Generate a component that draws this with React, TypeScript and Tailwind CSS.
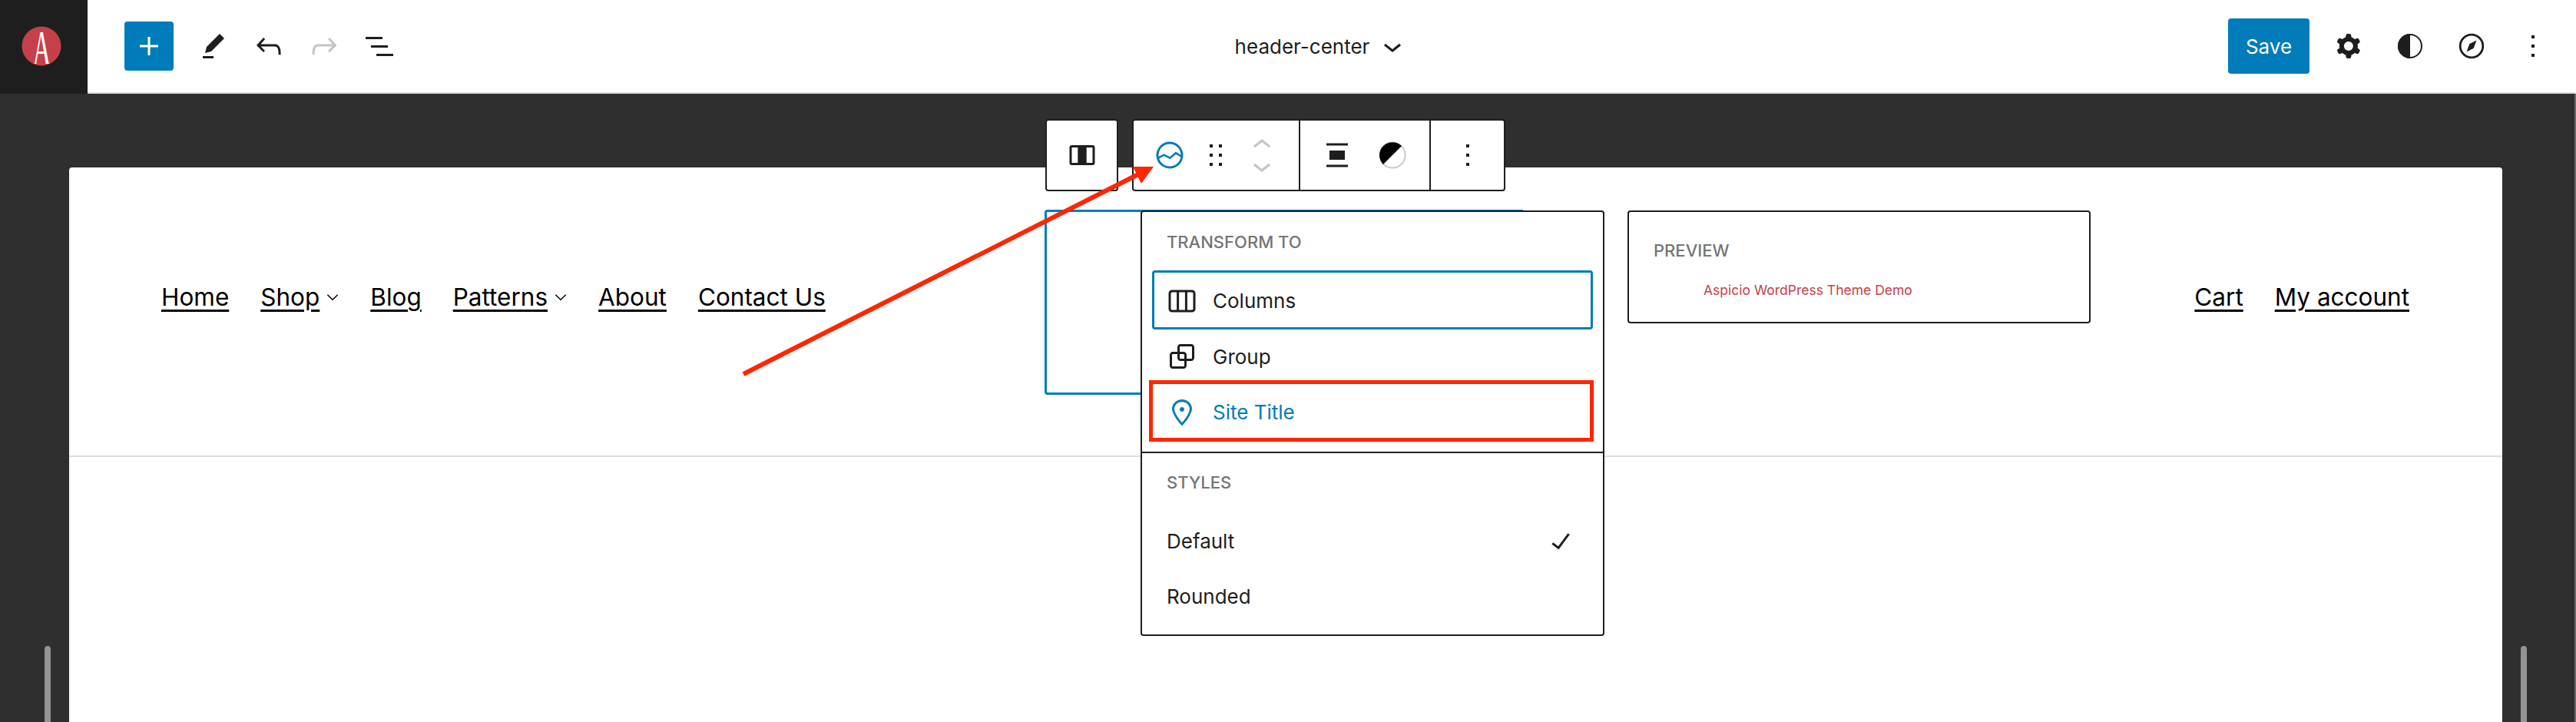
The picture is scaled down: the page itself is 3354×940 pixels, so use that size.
const ink = "#1e1e1e";

function Icon({ d, className = "", fill = "currentColor" }: { d: string; className?: string; fill?: string }) {
  return (
    <svg viewBox="0 0 24 24" className={`h-12 w-12 shrink-0 ${className}`} fill={fill}>
      <path d={d} fillRule="evenodd" clipRule="evenodd" />
    </svg>
  );
}

const paths = {
  plus: "M11.25 12.75V18h1.5v-5.25H18v-1.5h-5.25V6h-1.5v5.25H6v1.5h5.25Z",
  pen: "m19 7-3-3-8.5 8.5-1 4 4-1L19 7Zm-7 11.5H5V20h7v-1.5Z",
  undo: "M18.3 11.7c-.6-.6-1.4-.9-2.3-.9H6.7l2.9-3.3-1.1-1-4.5 5L8.5 16l1-1-2.7-2.7H16c.5 0 .9.2 1.3.5 1 1 1 3.4 1 4.5v.3h1.5v-.2c0-1.5 0-4.3-1.5-5.7z",
  redo: "M15.6 6.5l-1.1 1 2.9 3.3H8c-.9 0-1.7.3-2.3.9-1.4 1.5-1.4 4.2-1.4 5.6v.2h1.5v-.3c0-1.1 0-3.5 1-4.5.3-.3.7-.5 1.3-.5h9.2L14.5 15l1.1 1.1 4.6-4.6-4.6-5z",
  list: "M3 6h11v1.5H3V6Zm3.5 5.5h11V13h-11v-1.5ZM21 17H10v1.5h11V17Z",
  more: "M13 19h-2v-2h2v2zm0-6h-2v-2h2v2zm0-6h-2V5h2v2z",
  chevronDown: "M17.5 11.6L12 16l-5.5-4.4.9-1.2L12 14l4.5-3.6 1 1.2z",
  chevronUp: "M6.5 12.4L12 8l5.5 4.4-.9 1.2L12 10l-4.5 3.6-1-1.2z",
  drag: "M8 7h2V5H8v2zm0 6h2v-2H8v2zm0 6h2v-2H8v2zm6-14v2h2V5h-2zm0 8h2v-2h-2v2zm0 6h2v-2h-2v2z",
  cog: "M10.289 4.836A1 1 0 0 1 11.275 4h1.306a1 1 0 0 1 .987.836l.244 1.466c.787.26 1.503.679 2.108 1.218l1.393-.522a1 1 0 0 1 1.216.437l.653 1.13a1 1 0 0 1-.23 1.273l-1.148.944a6.025 6.025 0 0 1 0 2.435l1.149.946a1 1 0 0 1 .23 1.272l-.653 1.13a1 1 0 0 1-1.216.437l-1.394-.522c-.605.54-1.32.958-2.108 1.218l-.244 1.466a1 1 0 0 1-.987.836h-1.306a1 1 0 0 1-.986-.836l-.244-1.466a5.995 5.995 0 0 1-2.108-1.218l-1.394.522a1 1 0 0 1-1.217-.436l-.653-1.131a1 1 0 0 1 .23-1.272l1.149-.946a6.026 6.026 0 0 1 0-2.435l-1.148-.944a1 1 0 0 1-.23-1.272l.653-1.131a1 1 0 0 1 1.217-.437l1.393.522a5.994 5.994 0 0 1 2.108-1.218l.244-1.466ZM14.929 12a3 3 0 1 1-6 0 3 3 0 0 1 6 0Z",
  group: "M18 4h-7c-1.1 0-2 .9-2 2v3H6c-1.1 0-2 .9-2 2v7c0 1.1.9 2 2 2h7c1.1 0 2-.9 2-2v-3h3c1.1 0 2-.9 2-2V6c0-1.1-.9-2-2-2zm-4.5 14c0 .3-.2.5-.5.5H6c-.3 0-.5-.2-.5-.5v-7c0-.3.2-.5.5-.5h3V13c0 1.1.9 2 2 2h2.5v3zm0-4.5H11c-.3 0-.5-.2-.5-.5v-2.5H13c.3 0 .5.2.5.5v2.5zm5-.5c0 .3-.2.5-.5.5h-3V11c0-1.1-.9-2-2-2h-2.5V6c0-.3.2-.5.5-.5h7c.3 0 .5.2.5.5v7z",
  marker: "M12 9c-.8 0-1.5.7-1.5 1.5S11.2 12 12 12s1.5-.7 1.5-1.5S12.8 9 12 9zm0-5c-3.6 0-6.5 2.8-6.5 6.2 0 .8.3 1.8.9 3.1.5 1.1 1.2 2.3 2 3.6.7 1 3 3.8 3.2 3.9l.4.5.4-.5c.2-.2 2.6-2.9 3.2-3.9.8-1.2 1.5-2.5 2-3.6.6-1.3.9-2.3.9-3.1C18.5 6.8 15.6 4 12 4zm4.3 8.7c-.5 1-1.1 2.2-1.9 3.4-.5.7-1.7 2.2-2.4 3-.7-.8-1.9-2.3-2.4-3-.8-1.2-1.4-2.3-1.9-3.3-.6-1.4-.7-2.2-.7-2.5 0-2.6 2.2-4.7 5-4.7s5 2.1 5 4.7c0 .2-.1 1-.7 2.4z",
  check: "M16.7 7.1l-6.3 8.5-3.3-2.5-.9 1.2 4.5 3.4L17.9 8z",
};

function Logo() {
  return (
    <svg viewBox="0 0 114 122" className="h-[122px] w-[114px]">
      <defs>
        <clipPath id="logo-a">
          <rect x="0" y="0" width="114" height="83" />
        </clipPath>
      </defs>
      <circle cx="54" cy="60" r="25.5" fill="#c6404a" />
      <g clipPath="url(#logo-a)">
        <text
          x="0"
          y="85"
          transform="translate(54.5 0) scale(0.5 1) translate(-24 0)"
          fill="#fff"
          fontSize="66"
          fontFamily="'Liberation Serif', serif"
        >
          A
        </text>
      </g>
    </svg>
  );
}

function HalfCircle() {
  return (
    <svg viewBox="0 0 24 24" className="h-12 w-12">
      <circle cx="12" cy="12" r="7.5" fill="none" stroke={ink} strokeWidth="1" />
      <path d="M12 4a8 8 0 0 0 0 16Z" fill={ink} />
    </svg>
  );
}

function Compass() {
  return (
    <svg viewBox="0 0 24 24" className="h-12 w-12">
      <circle cx="12" cy="12" r="7.4" fill="none" stroke={ink} strokeWidth="1.4" />
      <path d="M15.2 8.2 13.4 13.4 8.8 15.8 10.6 10.6Z" fill={ink} />
    </svg>
  );
}

function ColumnsBlock() {
  return (
    <svg viewBox="0 0 24 24" className="h-12 w-12">
      <rect x="3.75" y="5.5" width="16.5" height="13" rx="1.6" fill={ink} />
      <rect x="5.25" y="7" width="3.9" height="10" fill="#fff" />
      <rect x="14.85" y="7" width="3.9" height="10" fill="#fff" />
    </svg>
  );
}

function SiteLogoBlock() {
  return (
    <svg viewBox="0 0 24 24" className="h-12 w-12" fill="none" stroke="#007cba">
      <circle cx="12" cy="12" r="8" strokeWidth="1.5" />
      <path d="M4.6 13.8 8.2 11.8 12.2 13.8 16 10.6 19.6 12.8" strokeWidth="1.3" />
    </svg>
  );
}

function AlignBlock() {
  return (
    <svg viewBox="0 0 24 24" className="h-12 w-12" fill={ink}>
      <rect x="5" y="4.25" width="14" height="1.5" />
      <rect x="7" y="9" width="10" height="6" />
      <rect x="5" y="18.25" width="14" height="1.5" />
    </svg>
  );
}

function Duotone() {
  return (
    <svg viewBox="0 0 24 24" className="h-12 w-12">
      <circle cx="12" cy="12" r="8.3" fill="#fff" stroke="#cccccc" strokeWidth="1" />
      <path d="M18.01 5.99A8.5 8.5 0 0 0 5.99 18.01Z" fill="#000" />
    </svg>
  );
}

function ColumnsMenu() {
  return (
    <svg viewBox="0 0 24 24" className="h-12 w-12" fill="none" stroke={ink} strokeWidth="1.5">
      <rect x="4" y="5.5" width="16" height="13" rx="1.5" />
      <path d="M9.3 5.5v13M14.7 5.5v13" />
    </svg>
  );
}

function NavLink({ label, caret = false }: { label: string; caret?: boolean }) {
  return (
    <a className="flex items-center text-[31.5px] leading-[44px] text-black underline decoration-[3px] underline-offset-[5px]">
      {label}
      {caret ? (
        <svg viewBox="0 0 12 12" className="ml-[9px] h-4 w-4 shrink-0" fill="none" stroke="#000" strokeWidth="1.1">
          <path d="M1 3.5 6 8.5 11 3.5" />
        </svg>
      ) : null}
    </a>
  );
}

function MenuItem({ icon, label, tone = "text-[#1e1e1e]" }: { icon: React.ReactNode; label: string; tone?: string }) {
  return (
    <div className={`flex h-full items-center gap-4 pl-3 text-[26px] ${tone}`}>
      {icon}
      {label}
    </div>
  );
}

export default function App() {
  return (
    <div className="relative flex h-[940px] w-[3354px] flex-col overflow-hidden bg-[#2f2f2f] font-['Inter',sans-serif] text-[#1e1e1e]">
      <header className="flex h-[122px] shrink-0">
        <div className="w-[114px] bg-[#1e1e1e]">
          <Logo />
        </div>
        <div className="flex flex-1 items-center border-b-2 border-[#e0e0e0] bg-white pr-8 pl-12">
          <div className="flex items-center gap-6">
            <button className="mr-[4px] flex h-16 w-16 items-center justify-center rounded-[4px] bg-[#007cba] text-white">
              <Icon d={paths.plus} />
            </button>
            <Icon d={paths.pen} />
            <Icon d={paths.undo} />
            <Icon d={paths.redo} className="text-[#c4c4c4]" />
            <Icon d={paths.list} />
          </div>
          <div className="flex flex-1 items-center justify-center gap-[6px] pl-[26px] text-[26px]">
            header-center
            <Icon d={paths.chevronDown} />
          </div>
          <div className="flex items-center gap-8">
            <button className="mr-[-5px] flex h-[72px] w-[106px] items-center justify-center rounded-[4px] bg-[#007cba] text-[26px] text-white">
              Save
            </button>
            <Icon d={paths.cog} />
            <HalfCircle />
            <Compass />
            <Icon d={paths.more} />
          </div>
        </div>
      </header>

      <main className="flex-1 px-[96px] pt-[96px] pl-[90px]">
        <div className="relative h-full rounded-t-[4px] bg-white">
          <div className="flex h-[377px] items-start justify-between border-b-2 border-[#dddddd] px-[120px] pt-[147px]">
            <nav className="flex items-center gap-[41px]">
              <NavLink label="Home" />
              <NavLink label="Shop" caret />
              <NavLink label="Blog" />
              <NavLink label="Patterns" caret />
              <NavLink label="About" />
              <NavLink label="Contact Us" />
            </nav>
            <nav className="flex items-center gap-[41px] pr-px">
              <NavLink label="Cart" />
              <NavLink label="My account" />
            </nav>
          </div>

          {/* selected block outline, sits under the popover */}
          <div className="absolute top-[55px] left-[1270px] h-[241px] w-[625px] rounded-[4px] border-[3px] border-[#007cba]" />

          <div className="absolute top-[-63px] left-[1271px] flex items-stretch gap-[18px]">
            <div className="flex h-[94px] w-[95px] items-center justify-center rounded-[4px] border-2 border-[#1e1e1e] bg-white">
              <ColumnsBlock />
            </div>
            <div className="flex h-[94px] w-[486px] rounded-[4px] border-2 border-[#1e1e1e] bg-white">
              <div className="flex w-[217px] items-center gap-3 border-r-2 border-[#1e1e1e] pl-[23px]">
                <SiteLogoBlock />
                <Icon d={paths.drag} />
                <div className="flex h-12 w-12 flex-col items-center justify-center text-[#c4c4c4]">
                  <Icon d={paths.chevronUp} className="my-[-10.5px]" />
                  <Icon d={paths.chevronDown} className="my-[-10.5px]" />
                </div>
              </div>
              <div className="flex w-[170px] items-center justify-center gap-6 border-r-2 border-[#1e1e1e]">
                <AlignBlock />
                <Duotone />
              </div>
              <div className="flex flex-1 items-center justify-center">
                <Icon d={paths.more} />
              </div>
            </div>
          </div>

          <div className="absolute top-[56px] left-[1395px] h-[554px] w-[604px] rounded-[4px] border-2 border-[#1e1e1e] bg-white">
            <section className="h-[314px] border-b-2 border-[#1e1e1e] px-[13px]">
              <div className="flex h-[76px] items-center pt-[2px] pl-[19px] text-[22px] font-medium text-[#757575] uppercase">
                Transform to
              </div>
              <div className="h-[77px] rounded-[4px] border-[3px] border-[#007cba] pt-[2px]">
                <MenuItem icon={<ColumnsMenu />} label="Columns" />
              </div>
              <div className="h-[70px] border-[3px] border-transparent">
                <MenuItem icon={<Icon d={paths.group} />} label="Group" />
              </div>
              <div className="relative h-[74px] border-[3px] border-transparent">
                <MenuItem icon={<Icon d={paths.marker} />} label="Site Title" tone="text-[#007cba]" />
                <div className="absolute top-[-7px] left-[-7px] h-[80px] w-[579px] border-[5px] border-[#ff2600]" />
              </div>
            </section>
            <section className="px-8">
              <div className="flex h-[76px] items-center text-[22px] font-medium text-[#757575] uppercase">Styles</div>
              <div className="mt-[2px] flex h-[72px] items-center justify-between text-[26px]">
                Default
                <Icon d={paths.check} className="mr-[-1px]" />
              </div>
              <div className="flex h-[72px] items-center text-[26px]">Rounded</div>
            </section>
          </div>

          <div className="absolute top-[56px] left-[2029px] h-[147px] w-[603px] rounded-[4px] border-2 border-[#1e1e1e] bg-white pl-8">
            <div className="flex h-[65px] items-end text-[22px] leading-[30px] font-medium text-[#757575] uppercase">Preview</div>
            <div className="mt-[22px] pl-[65px] text-[17.5px] leading-[30px] text-[#c6404a]">Aspicio WordPress Theme Demo</div>
          </div>
        </div>
      </main>

      {/* canvas scrollbars */}
      <div className="absolute top-[841px] bottom-0 left-[58px] w-2 rounded-t-full bg-[#949494]" />
      <div className="absolute top-[841px] bottom-0 left-[3282px] w-2 rounded-t-full bg-[#949494]" />
      <div className="absolute top-[122px] right-0 bottom-0 w-[2px] bg-[#6a6a6a]" />

      {/* annotation arrow */}
      <svg viewBox="0 0 3354 940" className="pointer-events-none absolute inset-0 h-[940px] w-[3354px]">
        <path d="M968 487 1484 226" stroke="#ff2600" strokeWidth="6" fill="none" />
        <path d="M1502 217 1475 217 1486 239Z" fill="#ff2600" />
      </svg>
    </div>
  );
}
